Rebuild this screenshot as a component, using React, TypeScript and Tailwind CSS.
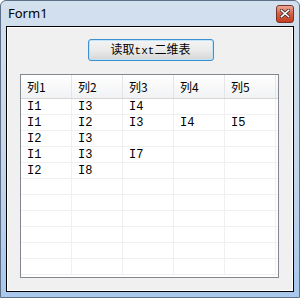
import React from "react";

const HEADERS = ["列1", "列2", "列3", "列4", "列5"];

// 表格数据，空行补齐到 11 行
const ROWS: string[][] = [
  ["I1", "I3", "I4", "", ""],
  ["I1", "I2", "I3", "I4", "I5"],
  ["I2", "I3", "", "", ""],
  ["I1", "I3", "I7", "", ""],
  ["I2", "I8", "", "", ""],
];
const TOTAL_ROWS = 11;

function CloseButton() {
  return (
    <div className="w-[18px] h-[18px] rounded-[3px] border border-[#7a3326] bg-gradient-to-b from-[#eaa896] via-[#d65d43] to-[#c43d20] flex items-center justify-center">
      <svg width="10" height="9" viewBox="0 0 10 9">
        <path
          d="M1.5 1.5 L8.5 7.5 M8.5 1.5 L1.5 7.5"
          stroke="#3a2a28"
          strokeWidth="3.2"
          strokeLinecap="square"
        />
        <path
          d="M1.5 1.5 L8.5 7.5 M8.5 1.5 L1.5 7.5"
          stroke="#ffffff"
          strokeWidth="1.6"
          strokeLinecap="square"
        />
      </svg>
    </div>
  );
}

export default function App() {
  const rows = [...ROWS];
  while (rows.length < TOTAL_ROWS) rows.push(["", "", "", "", ""]);

  return (
    <div className="w-[300px] h-[298px] flex flex-col rounded-t-[6px] bg-gradient-to-b from-[#d3e0ee] via-[#c8d8ea] to-[#a8c8ec] border border-[#5c6f86] font-['Noto_Sans',sans-serif]">
      {/* Title bar */}
      <div className="h-[25px] flex items-center justify-between pl-[7px] pr-[5px]">
        <span className="text-[13px] text-black leading-none">Form1</span>
        <CloseButton />
      </div>

      {/* Client area */}
      <div className="flex-1 mx-[5px] mb-[5px] border border-black flex flex-col">
        <div className="flex-1 border border-white bg-[#f0f0f0] flex flex-col">
          <div className="flex justify-center pt-[11px] pl-[1px]">
            <button className="w-[126px] h-[22px] rounded-[3px] border border-[#3c8fd0] bg-gradient-to-b from-[#f4f4f4] via-[#ebebeb] to-[#d6d6d6] shadow-[inset_0_0_0_1px_#bfe3f8] text-[12px] text-black leading-none font-['Noto_Sans_CJK_SC',sans-serif]">
              读取<span className="font-['Liberation_Mono',monospace] text-[11px]">txt</span>二维表
            </button>
          </div>

          {/* ListView */}
          <div className="mt-[13px] ml-[12px] w-[259px] h-[204px] border border-[#828790] bg-white">
            <div className="flex h-[24px] border-b border-[#d5d5d5] bg-gradient-to-b from-[#ffffff] to-[#f1f2f4]">
              {HEADERS.map((h) => (
                <div
                  key={h}
                  className="w-[51px] shrink-0 border-r border-[#e3e5e8] flex items-center pl-[6px] text-[12px] text-black font-['Noto_Sans_CJK_SC',sans-serif]"
                >
                  {h}
                </div>
              ))}
            </div>
            {rows.map((r, i) => (
              <div key={i} className="flex h-[16px] border-b border-[#f0f0f0]">
                {r.map((c, j) => (
                  <div
                    key={j}
                    className="w-[51px] shrink-0 border-r border-[#f0f0f0] flex items-center pl-[6px] text-[12px] text-black leading-none font-['Liberation_Mono',monospace]"
                  >
                    {c}
                  </div>
                ))}
              </div>
            ))}
          </div>
        </div>
      </div>
    </div>
  );
}
